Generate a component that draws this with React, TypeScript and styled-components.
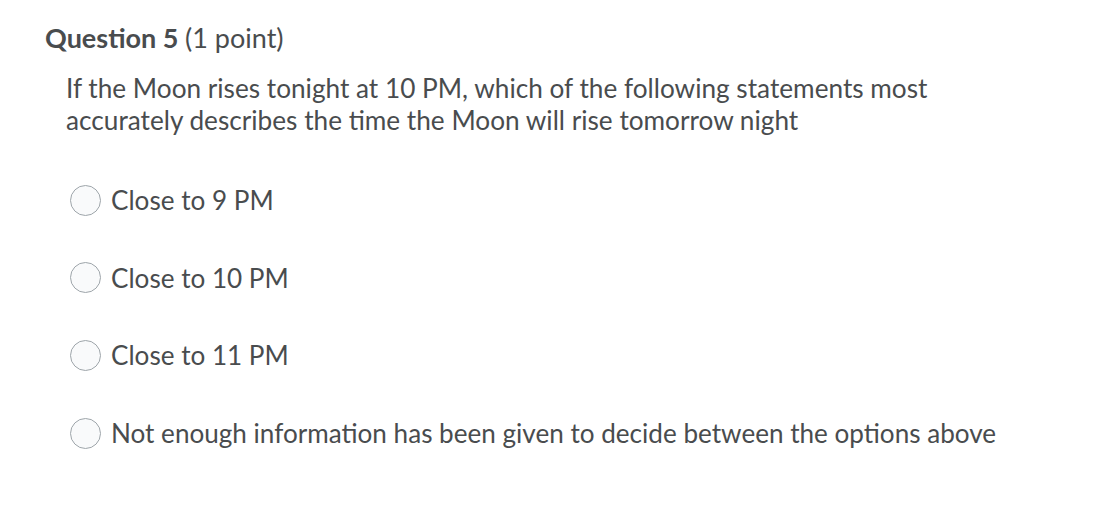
import React from 'react';
import styled, { createGlobalStyle } from 'styled-components';

const GlobalStyle = createGlobalStyle`
  body {
    margin: 0;
    background: #ffffff;
    font-family: Lato, "Open Sans", sans-serif;
    color: #494c4e;
  }
`;

const Page = styled.div`
  padding: 22px 0 0 45px;
`;

const Title = styled.h2`
  margin: 0;
  font-size: 27px;
  font-weight: 700;
  line-height: 32px;
  span {
    font-weight: 400;
  }
`;

const Prompt = styled.p`
  margin: 18px 0 0 21px;
  font-size: 26.2px;
  line-height: 32px;
`;

const Options = styled.div`
  display: flex;
  flex-direction: column;
  gap: 45.7px;
  margin: 48px 0 0 25px;
`;

const Option = styled.label`
  display: flex;
  align-items: center;
  gap: 10px;
  font-size: 26.1px;
  line-height: 32px;
`;

const Radio = styled.span`
  width: 29px;
  height: 29px;
  border-radius: 50%;
  border: 1.5px solid #9ea5aa;
  background: #f9fafb;
  flex-shrink: 0;
`;

const choices = [
  'Close to 9 PM',
  'Close to 10 PM',
  'Close to 11 PM',
  'Not enough information has been given to decide between the options above',
];

const App: React.FC = () => (
  <Page>
    <GlobalStyle />
    <Title>
      Question 5 <span>(1 point)</span>
    </Title>
    <Prompt>
      If the Moon rises tonight at 10 PM, which of the following statements most
      <br />
      accurately describes the time the Moon will rise tomorrow night
    </Prompt>
    <Options>
      {choices.map((c) => (
        <Option key={c}>
          <Radio />
          {c}
        </Option>
      ))}
    </Options>
  </Page>
);

export default App;
